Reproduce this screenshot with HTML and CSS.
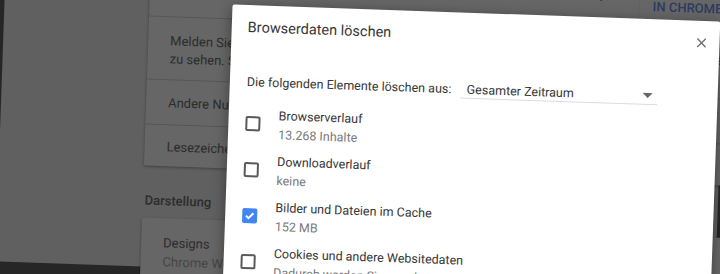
FILE: index.html
```html
<!DOCTYPE html>
<html lang="de">
<head>
  <meta charset="UTF-8" />
  <title>Einstellungen - Browserdaten löschen</title>
  <link rel="stylesheet" href="styles.css">
</head>
<body>
  <div class="scene">

    <div class="settings">
      <div class="card">
        <div class="row row-top">
          <span class="avatar"></span>
          <span class="chev">
            <svg width="8" height="12" viewBox="0 0 8 12"><path d="M1.5 1L6.5 6L1.5 11" stroke="#3a3a3a" stroke-width="2" fill="none"/></svg>
          </span>
          <span class="signin">In Chrome anmelden</span>
        </div>
        <div class="row row-two">
          <p>Melden Sie sich an, um Ihre Lesezeichen, Ihren Verlauf, Ihre Passwörter und weitere Einstellungen auf all Ihren</p>
          <p>zu sehen. Sie werden außerdem automatisch in Google-Diensten angemeldet.</p>
        </div>
        <div class="row">Andere Nutzer verwalten</div>
        <div class="row row-last">Lesezeichen und Einstellungen importieren</div>
      </div>

      <div class="section-title">Darstellung</div>

      <div class="card">
        <div class="row row-design">
          <p>Designs</p>
          <p class="muted">Chrome Web Store öffnen</p>
        </div>
      </div>
    </div>

    <div class="scrim"></div>

    <div class="dialog">
      <div class="dialog-head">
        <span class="dialog-title">Browserdaten löschen</span>
        <span class="close">
          <svg width="10" height="10" viewBox="0 0 10 10"><path d="M0.8 0.8L9.2 9.2M9.2 0.8L0.8 9.2" stroke="#6e6e6e" stroke-width="1.3" fill="none"/></svg>
        </span>
      </div>

      <div class="range-row">
        <span class="range-label">Die folgenden Elemente löschen aus:</span>
        <span class="select">
          <span>Gesamter Zeitraum</span>
          <span class="arrow"></span>
        </span>
      </div>

      <div class="items">
        <div class="item">
          <span class="box"></span>
          <div class="item-text">
            <div>Browserverlauf</div>
            <div class="sub">13.268 Inhalte</div>
          </div>
        </div>
        <div class="item">
          <span class="box"></span>
          <div class="item-text">
            <div>Downloadverlauf</div>
            <div class="sub">keine</div>
          </div>
        </div>
        <div class="item">
          <span class="box checked">
            <svg width="11" height="11" viewBox="0 0 11 11"><path d="M1.8 5.6L4.3 8L9.2 3" stroke="#fff" stroke-width="2" fill="none"/></svg>
          </span>
          <div class="item-text">
            <div>Bilder und Dateien im Cache</div>
            <div class="sub">152 MB</div>
          </div>
        </div>
        <div class="item">
          <span class="box"></span>
          <div class="item-text">
            <div>Cookies und andere Websitedaten</div>
            <div class="sub">Dadurch werden Sie von den meisten Websites abgemeldet.</div>
          </div>
        </div>
      </div>
    </div>

  </div>
</body>
</html>
```

FILE: styles.css
```css
body {
  margin: 0;
  overflow: hidden;
  background: #5f5f5f;
  font-family: Roboto, "Noto Sans", sans-serif;
  font-size: 13px;
}

/* the photo is taken slightly tilted */
.scene {
  position: relative;
  width: 720px;
  height: 274px;
  background: #efefef;
  transform: rotate(2deg);
  transform-origin: 50% 50%;
}

/* settings page behind the dialog */
.settings {
  display: flow-root;
  margin-left: 145px;
  width: 660px;
  color: #707070;
}

.card {
  background: #ffffff;
  border-radius: 2px;
  box-shadow: 0 1px 3px rgba(0, 0, 0, 0.35);
}

.settings > .card:first-child {
  margin-top: -30px;
}

.row {
  box-sizing: border-box;
  height: 45px;
  padding: 0 22px;
  display: flex;
  align-items: center;
  border-top: 1px solid #d6d6d6;
}

.row p {
  margin: 0;
}

.row-top {
  height: 53px;
  border-top: none;
  padding-right: 0;
  align-items: flex-start;
}

.avatar {
  flex: none;
  width: 24px;
  height: 24px;
  border-radius: 50%;
  background: #bdbdbd;
  margin-left: -1px;
  margin-top: 11px;
}

.chev {
  flex: none;
  margin-left: 404px;
  margin-top: 11px;
  width: 8px;
  height: 12px;
}

.chev svg {
  display: block;
}

.signin {
  flex: none;
  margin-left: 32px;
  border-left: 1px solid #f4f4f4;
  padding-left: 13px;
  height: 53px;
  line-height: 54px;
  text-transform: uppercase;
  font-weight: 500;
  color: #6f95f5;
  white-space: nowrap;
}

.row-two {
  height: 63px;
  display: block;
  padding-top: 15px;
  line-height: 18px;
  white-space: nowrap;
}

.row-last {
  height: 42px;
  padding-top: 2px;
}

.section-title {
  margin: 25px 0 7px 2px;
  line-height: 20px;
  font-weight: 500;
}

.row-design {
  display: block;
  height: 60px;
  border-top: none;
  padding-top: 15px;
  line-height: 19px;
}

.muted {
  color: #b0b0b0;
}

.scrim {
  position: absolute;
  top: -80px;
  left: -80px;
  right: -80px;
  bottom: -80px;
  background: rgba(0, 0, 0, 0.6);
}

/* dialog */
.dialog {
  position: absolute;
  left: 228px;
  top: 9px;
  width: 488px;
  height: 300px;
  background: #ffffff;
  border-radius: 2px;
  box-shadow: 0 3px 14px rgba(0, 0, 0, 0.4);
  color: #363636;
  font-size: 12.5px;
}

.dialog-head {
  display: flex;
  justify-content: space-between;
  align-items: flex-start;
  padding: 13px 13px 0 16px;
}

.dialog-title {
  font-size: 14.5px;
  line-height: 20px;
}

.close {
  margin-top: 4px;
  height: 10px;
}

.close svg {
  display: block;
}

.range-row {
  display: flex;
  align-items: baseline;
  margin-top: 34px;
  padding-left: 17px;
}

.range-label {
  flex: 0 0 214px;
  line-height: 20px;
}

.select {
  box-sizing: border-box;
  width: 197px;
  display: flex;
  align-items: center;
  justify-content: space-between;
  line-height: 17px;
  padding-left: 6px;
  padding-right: 5px;
  border-bottom: 1px solid #dcdcdc;
}

.arrow {
  width: 0;
  height: 0;
  border-left: 5px solid transparent;
  border-right: 5px solid transparent;
  border-top: 5px solid #666666;
  margin-top: -1px;
}

.items {
  margin-top: 8px;
}

.item {
  display: flex;
  align-items: center;
  height: 46px;
  padding-left: 17px;
}

.box {
  box-sizing: border-box;
  flex: none;
  width: 15px;
  height: 15px;
  border: 2px solid #5a5a5a;
  border-radius: 2px;
}

.box.checked {
  background: #4285f4;
  border-color: #4285f4;
  display: flex;
  align-items: center;
  justify-content: center;
}

.item-text {
  margin-left: 18px;
  padding-top: 3px;
  line-height: 18.5px;
  white-space: nowrap;
}

.sub {
  color: #7a7a7a;
}
```
